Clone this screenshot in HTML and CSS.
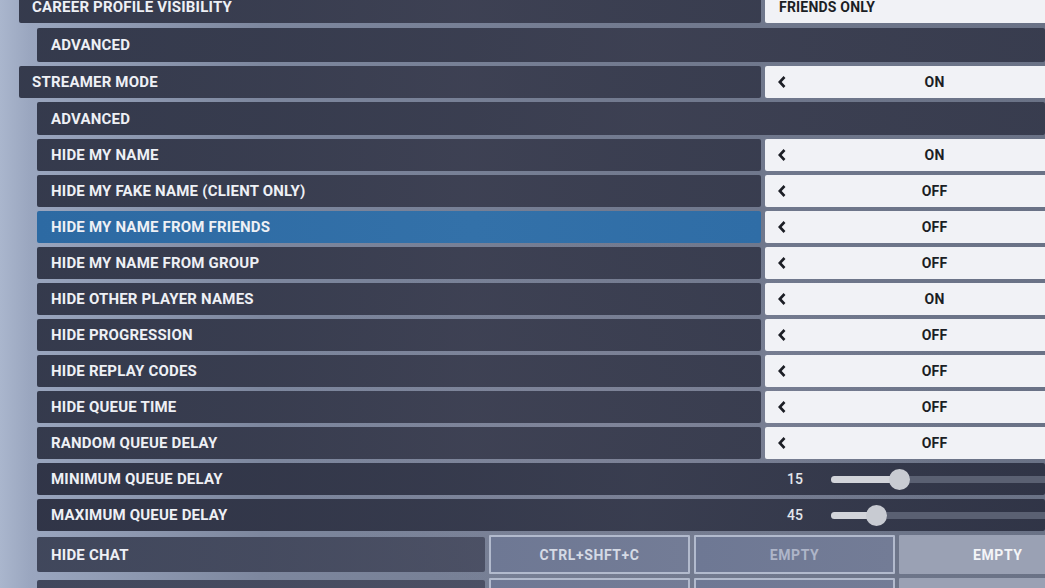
FILE: index.html
```html
<!DOCTYPE html>
<html lang="en">
<head>
<meta charset="utf-8">
<title>Social Settings</title>
<link rel="stylesheet" href="styles.css">
</head>
<body>
<div class="settings">
  <div class="row top first">
    <div class="label">CAREER PROFILE VISIBILITY</div>
    <div class="value plain">FRIENDS ONLY</div>
  </div>
  <div class="row sub header"><div class="label wide">ADVANCED</div></div>

  <div class="row top">
    <div class="label">STREAMER MODE</div>
    <div class="value"><svg class="chev" viewBox="0 0 8 12"><polyline points="6.5,1 1.8,6 6.5,11"/></svg><span class="val">ON</span></div>
  </div>
  <div class="row sub header second"><div class="label wide">ADVANCED</div></div>

  <div class="row sub">
    <div class="label">HIDE MY NAME</div>
    <div class="value"><svg class="chev" viewBox="0 0 8 12"><polyline points="6.5,1 1.8,6 6.5,11"/></svg><span class="val">ON</span></div>
  </div>
  <div class="row sub">
    <div class="label">HIDE MY FAKE NAME (CLIENT ONLY)</div>
    <div class="value"><svg class="chev" viewBox="0 0 8 12"><polyline points="6.5,1 1.8,6 6.5,11"/></svg><span class="val">OFF</span></div>
  </div>
  <div class="row sub">
    <div class="label selected">HIDE MY NAME FROM FRIENDS</div>
    <div class="value"><svg class="chev" viewBox="0 0 8 12"><polyline points="6.5,1 1.8,6 6.5,11"/></svg><span class="val">OFF</span></div>
  </div>
  <div class="row sub">
    <div class="label">HIDE MY NAME FROM GROUP</div>
    <div class="value"><svg class="chev" viewBox="0 0 8 12"><polyline points="6.5,1 1.8,6 6.5,11"/></svg><span class="val">OFF</span></div>
  </div>
  <div class="row sub">
    <div class="label">HIDE OTHER PLAYER NAMES</div>
    <div class="value"><svg class="chev" viewBox="0 0 8 12"><polyline points="6.5,1 1.8,6 6.5,11"/></svg><span class="val">ON</span></div>
  </div>
  <div class="row sub">
    <div class="label">HIDE PROGRESSION</div>
    <div class="value"><svg class="chev" viewBox="0 0 8 12"><polyline points="6.5,1 1.8,6 6.5,11"/></svg><span class="val">OFF</span></div>
  </div>
  <div class="row sub">
    <div class="label">HIDE REPLAY CODES</div>
    <div class="value"><svg class="chev" viewBox="0 0 8 12"><polyline points="6.5,1 1.8,6 6.5,11"/></svg><span class="val">OFF</span></div>
  </div>
  <div class="row sub">
    <div class="label">HIDE QUEUE TIME</div>
    <div class="value"><svg class="chev" viewBox="0 0 8 12"><polyline points="6.5,1 1.8,6 6.5,11"/></svg><span class="val">OFF</span></div>
  </div>
  <div class="row sub">
    <div class="label">RANDOM QUEUE DELAY</div>
    <div class="value"><svg class="chev" viewBox="0 0 8 12"><polyline points="6.5,1 1.8,6 6.5,11"/></svg><span class="val">OFF</span></div>
  </div>

  <div class="row sub slider-row">
    <div class="label">MINIMUM QUEUE DELAY</div>
    <div class="slider">
      <span class="num">15</span>
      <div class="track"><div class="fill" style="width:68px"></div><div class="knob"></div></div>
    </div>
  </div>
  <div class="row sub slider-row">
    <div class="label">MAXIMUM QUEUE DELAY</div>
    <div class="slider">
      <span class="num">45</span>
      <div class="track"><div class="fill" style="width:45px"></div><div class="knob"></div></div>
    </div>
  </div>

  <div class="row sub bind-row">
    <div class="label bind-label">HIDE CHAT</div>
    <div class="key">CTRL+SHFT+C</div>
    <div class="key dim">EMPTY</div>
    <div class="key solid">EMPTY</div>
  </div>
  <div class="row sub bind-row">
    <div class="label bind-label"></div>
    <div class="key"></div>
    <div class="key dim"></div>
    <div class="key solid"></div>
  </div>
</div>
</body>
</html>
```

FILE: styles.css
```css
* { box-sizing: border-box; }

html, body {
  margin: 0;
  width: 1045px;
  height: 588px;
  overflow: hidden;
}

body {
  background:
    radial-gradient(ellipse 500px 260px at 620px 420px, rgba(150, 150, 170, 0.35), transparent 70%),
    linear-gradient(90deg, #aab6cd 0px, #9aa6bf 30px, #7d879e 260px, #737b90 600px, #6a7286 1045px);
  font-family: Roboto, "Liberation Sans", sans-serif;
  font-weight: 700;
  font-size: 15px;
  color: #eef0f5;
}

.settings {
  display: flex;
  flex-direction: column;
  gap: 4px;
  margin-top: -9px;
  padding-left: 19px;
}

.row {
  display: flex;
  gap: 4px;
  height: 32px;
  flex: 0 0 auto;
}

.row.first { margin-bottom: 1px; }
.row.sub { margin-left: 18px; }
.row.header { height: 34px; }
.row.header.second { height: 33px; }

.label {
  flex: 0 0 auto;
  width: 742px;
  display: flex;
  align-items: center;
  padding-left: 13px;
  background: linear-gradient(90deg, rgba(45, 50, 68, 0.93), rgba(55, 58, 76, 0.9) 60%, rgba(52, 56, 74, 0.92));
  border-radius: 2px;
  letter-spacing: 0.2px;
}

.row.sub .label { width: 724px; padding-left: 14px; }
.row .label.wide { width: auto; flex: 1 1 auto; }

.label.selected {
  background: linear-gradient(90deg, #2d6aa3, #3371a9 60%, #2f6da6);
}

.value {
  flex: 1 1 auto;
  display: flex;
  align-items: center;
  background: #f1f2f6;
  color: #1c1e25;
  border-radius: 2px 0 0 2px;
  padding-left: 13px;
  letter-spacing: 0.2px;
  font-size: 14px;
}

.value .chev {
  width: 8px;
  height: 12px;
  fill: none;
  stroke: #1c1e25;
  stroke-width: 2.6;
  stroke-linecap: butt;
  stroke-linejoin: miter;
}

.value .val {
  width: 297px;
  text-align: center;
}

.value.plain { padding-left: 14px; }

/* slider rows */
.slider-row {
  background: linear-gradient(90deg, rgba(42, 46, 64, 0.94), rgba(50, 54, 72, 0.9) 60%, rgba(44, 48, 66, 0.93));
  border-radius: 2px;
  gap: 0;
}

.slider-row .label { background: none; }

.slider {
  flex: 1 1 auto;
  display: flex;
  align-items: center;
}

.slider .num {
  width: 42px;
  text-align: right;
  font-weight: 500;
  color: #e3e6ec;
  font-size: 14px;
}

.track {
  margin-left: 28px;
  flex: 1 1 auto;
  height: 7px;
  border-radius: 4px 0 0 4px;
  background: #5a6072;
  display: flex;
  align-items: center;
}

.fill {
  height: 7px;
  border-radius: 4px 0 0 4px;
  background: #d2d4da;
}

.knob {
  width: 21px;
  height: 21px;
  margin-left: -10px;
  border-radius: 50%;
  background: #c8cbd2;
}

/* key binding rows */
.bind-row {
  height: 39px;
  gap: 4px;
  align-items: stretch;
}

.bind-label {
  width: 448px !important;
  margin: 2px 0;
  background: linear-gradient(90deg, rgba(52, 58, 78, 0.88), rgba(66, 70, 90, 0.82));
}

.key {
  flex: 0 0 auto;
  width: 201px;
  display: flex;
  align-items: center;
  justify-content: center;
  border: 2px solid #b2bacd;
  background: linear-gradient(90deg, #6e7894, #737c96);
  color: #d5dae5;
  letter-spacing: 0.6px;
  border-radius: 1px;
  font-size: 14px;
}

.key.dim { color: #aeb5c8; }

.key.solid {
  width: 150px;
  border: none;
  background: #9aa1b4;
  color: #f4f5f8;
  justify-content: flex-start;
  padding-left: 74px;
}
```
